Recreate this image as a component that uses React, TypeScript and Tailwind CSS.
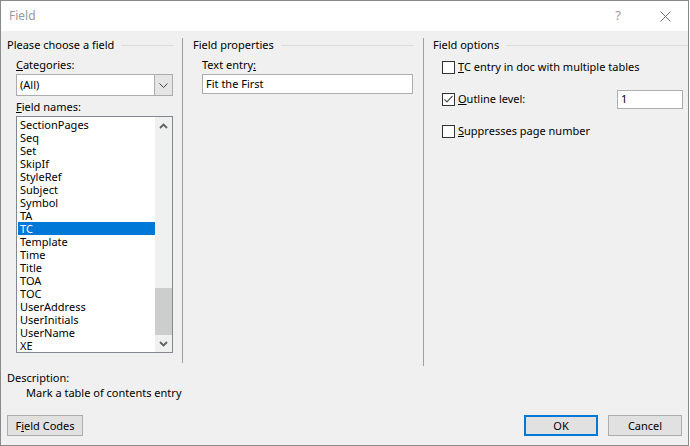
const fieldNames = [
  'SectionPages',
  'Seq',
  'Set',
  'SkipIf',
  'StyleRef',
  'Subject',
  'Symbol',
  'TA',
  'TC',
  'Template',
  'Time',
  'Title',
  'TOA',
  'TOC',
  'UserAddress',
  'UserInitials',
  'UserName',
  'XE',
]

const GroupTitle = ({ title }: { title: string }) => (
  <div className="flex h-4 items-center leading-4">
    <span>{title}</span>
    <div className="ml-[7px] h-px flex-1 bg-[#dcdcdc]" />
  </div>
)

const Chevron = ({ up }: { up?: boolean }) => (
  <svg width="9" height="6" viewBox="0 0 9 6" className="block">
    <polyline
      points={up ? '1,5 4.5,1.5 8,5' : '1,1 4.5,4.5 8,1'}
      fill="none"
      stroke="#606060"
      strokeWidth="1.8"
    />
  </svg>
)

const CheckBox = ({ checked }: { checked?: boolean }) => (
  <div className="flex h-[13px] w-[13px] shrink-0 items-center justify-center border border-[#333] bg-white">
    {checked && (
      <svg width="11" height="11" viewBox="0 0 11 11">
        <polyline points="1.5,5.5 4,8 9.5,2" fill="none" stroke="#555" strokeWidth="1.2" />
      </svg>
    )}
  </div>
)

const Button = ({ children, primary, className = '' }: { children: React.ReactNode; primary?: boolean; className?: string }) => (
  <div
    className={`flex h-[21px] items-center justify-center bg-[#e1e1e1] leading-4 ${
      primary ? 'border-2 border-[#0078d7]' : 'border border-[#adadad]'
    } ${className}`}
  >
    {children}
  </div>
)

export default function App() {
  return (
    <div className="h-[446px] w-[690px] bg-white font-['Noto_Sans',sans-serif] text-[11px] text-black">
      <div className="flex h-[446px] w-[689px] flex-col border border-[#8a8a8a] bg-[#f0f0f0]">
        {/* title bar */}
        <div className="flex h-[30px] shrink-0 items-center bg-white pl-[8px] text-[12px] text-[#999]">
          <span className="flex-1">Field</span>
          <span className="mr-[39px] text-[13px]">?</span>
          <svg width="11" height="11" viewBox="0 0 11 11" className="mr-[17px]">
            <path d="M0.5 0.5 L10.5 10.5 M10.5 0.5 L0.5 10.5" stroke="#777" strokeWidth="1" />
          </svg>
        </div>

        {/* groups */}
        <div className="flex h-[336px] shrink-0">
          <div className="ml-[6px] w-[167px] pt-[6px]">
            <GroupTitle title="Please choose a field" />
            <div className="pl-[9px]">
              <div className="mt-[4px] leading-4">
                <span className="underline">C</span>ategories:
              </div>
              <div className="mt-px flex h-[22px] w-[157px] border border-[#adadad] bg-white">
                <div className="flex flex-1 items-center pl-[3px] leading-4">(All)</div>
                <div className="flex w-[18px] items-center justify-center border-l border-[#adadad] bg-[#e5e5e5]">
                  <svg width="9" height="5" viewBox="0 0 9 5">
                    <polyline points="0.5,0.5 4.5,4.5 8.5,0.5" fill="none" stroke="#444" strokeWidth="1" />
                  </svg>
                </div>
              </div>
              <div className="mt-[3px] leading-4">
                <span className="underline">F</span>ield names:
              </div>
              <div className="mt-px flex h-[237px] w-[157px] overflow-hidden border border-[#828790] bg-white">
                <div className="flex-1 pl-px pt-px">
                  {fieldNames.map((name) => (
                    <div
                      key={name}
                      className={`h-[13px] pl-[2px] leading-[13px] ${
                        name === 'TC' ? 'bg-[#0078d7] text-white' : ''
                      }`}
                    >
                      {name}
                    </div>
                  ))}
                </div>
                <div className="flex w-[17px] flex-col bg-[#f0f0f0]">
                  <div className="flex h-[17px] items-center justify-center">
                    <Chevron up />
                  </div>
                  <div className="flex-1" />
                  <div className="h-[47px] bg-[#cdcdcd]" />
                  <div className="flex h-[17px] items-center justify-center">
                    <Chevron />
                  </div>
                </div>
              </div>
            </div>
          </div>

          <div className="ml-[8px] mt-[7px] h-[325px] w-px bg-[#a0a0a0]" />

          <div className="ml-[10px] w-[221px] pt-[6px]">
            <GroupTitle title="Field properties" />
            <div className="pl-[9px]">
              <div className="mt-[4px] leading-4">
                Text entry<span className="underline">:</span>
              </div>
              <div className="mt-px flex h-[20px] w-[211px] items-center border border-[#adadad] bg-white pl-[3px] leading-4">
                Fit the First
              </div>
            </div>
          </div>

          <div className="ml-[9px] mt-[7px] h-[328px] w-px bg-[#a0a0a0]" />

          <div className="ml-[9px] flex-1 pt-[6px]">
            <GroupTitle title="Field options" />
            <div className="pl-[9px]">
              <div className="mt-[4px] flex h-[20px] items-center">
                <CheckBox />
                <span className="ml-[3px] leading-4">
                  <span className="underline">T</span>C entry in doc with multiple tables
                </span>
              </div>
              <div className="mt-[12px] flex h-[20px] items-center">
                <CheckBox checked />
                <span className="ml-[3px] leading-4">
                  <span className="underline">O</span>utline level:
                </span>
                <div className="ml-auto mr-[5px] flex h-[19px] w-[66px] items-center border border-[#adadad] bg-white pl-[3px] leading-4">
                  1
                </div>
              </div>
              <div className="mt-[12px] flex h-[20px] items-center">
                <CheckBox />
                <span className="ml-[3px] leading-4">
                  <span className="underline">S</span>uppresses page number
                </span>
              </div>
            </div>
          </div>
        </div>

        {/* description */}
        <div className="ml-[6px] mt-[3px] leading-4">Description:</div>
        <div className="-mt-px ml-[25px] leading-4">Mark a table of contents entry</div>

        {/* buttons */}
        <div className="mt-[14px] flex">
          <Button className="ml-[6px] w-[76px]">
            F<span className="underline">i</span>eld Codes
          </Button>
          <div className="flex-1" />
          <Button primary className="w-[74px]">
            OK
          </Button>
          <Button className="ml-[10px] mr-[6px] w-[74px]">Cancel</Button>
        </div>
      </div>
    </div>
  )
}
